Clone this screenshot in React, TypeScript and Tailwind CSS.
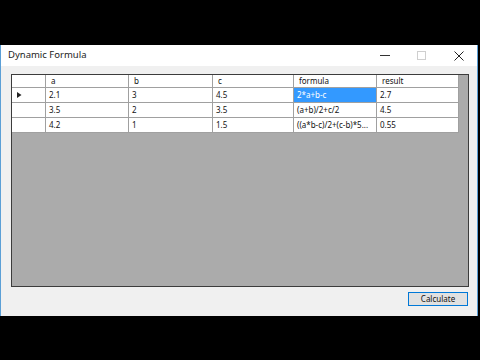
const cols = [
  { name: "a", w: "w-[83px]" },
  { name: "b", w: "w-[84px]" },
  { name: "c", w: "w-[81px]" },
  { name: "formula", w: "w-[83px]" },
  { name: "result", w: "w-[82px]" },
];

const rows = [
  ["2.1", "3", "4.5", "2*a+b-c", "2.7"],
  ["3.5", "2", "3.5", "(a+b)/2+c/2", "4.5"],
  ["4.2", "1", "1.5", "((a*b-c)/2+(c-b)*5...", "0.55"],
];

function TitleBar() {
  return (
    <div className="h-[21px] bg-white flex items-center">
      <span className="pl-[7px] text-[9.5px] text-[#222] flex-1">Dynamic Formula</span>
      {/* minimize */}
      <div className="w-[37px] h-full flex items-center justify-center">
        <div className="w-[10px] h-px bg-[#333]" />
      </div>
      {/* maximize (disabled) */}
      <div className="w-[37px] h-full flex items-center justify-center">
        <div className="w-[9px] h-[9px] border border-[#cfcfcf]" />
      </div>
      {/* close */}
      <div className="w-[37px] h-full flex items-center justify-center">
        <svg width="10" height="10" viewBox="0 0 10 10">
          <path d="M0.5 0.5 L9.5 9.5 M9.5 0.5 L0.5 9.5" stroke="#222" strokeWidth="1" />
        </svg>
      </div>
    </div>
  );
}

function Grid() {
  return (
    <div className="h-[213px] border border-[#3c3c3c] bg-[#ababab] flex flex-col">
      {/* header row */}
      <div className="flex h-[13px]">
        <div className="w-[34px] bg-white border-r border-b border-[#a0a0a0]" />
        {cols.map((c) => (
          <div
            key={c.name}
            className={`${c.w} bg-white border-r border-b border-[#a0a0a0] pl-[5px] leading-[12px] text-[8px] text-[#111]`}
          >
            {c.name}
          </div>
        ))}
      </div>
      {rows.map((r, i) => (
        <div key={i} className="flex h-[15px]">
          <div className="w-[34px] bg-white border-r border-b border-[#a0a0a0] flex items-center pl-[5px]">
            {i === 0 && (
              <svg width="5" height="6" viewBox="0 0 5 6">
                <path d="M0 0 L4.5 3 L0 6 Z" fill="#222" />
              </svg>
            )}
          </div>
          {r.map((v, j) => {
            const sel = i === 0 && j === 3;
            return (
              <div
                key={j}
                className={`${cols[j].w} border-r border-b border-[#a0a0a0] pl-[3px] leading-[14px] text-[8px] whitespace-nowrap overflow-hidden ${
                  sel ? "bg-[#3399ff] text-white" : "bg-white text-[#111]"
                }`}
              >
                {v}
              </div>
            );
          })}
        </div>
      ))}
    </div>
  );
}

export default function App() {
  return (
    <div
      className="w-[480px] h-[360px] bg-black flex flex-col"
      style={{ fontFamily: '"Noto Sans", "Liberation Sans", sans-serif' }}
    >
      <div className="h-[45px]" />
      <div className="h-[271px] w-[478px] border-x border-[#5b9fd6] bg-[#f0f0f0] flex flex-col">
        <TitleBar />
        <div className="flex flex-col pl-[10px] pr-[8px] pt-[8px]">
          <Grid />
          <div className="flex justify-end mt-[5px] pr-[1px]">
            <button className="w-[60px] h-[14px] border border-[#0078d7] bg-[#e1e1e1] text-[8px] leading-[12px] text-[#111]">
              Calculate
            </button>
          </div>
        </div>
      </div>
    </div>
  );
}
